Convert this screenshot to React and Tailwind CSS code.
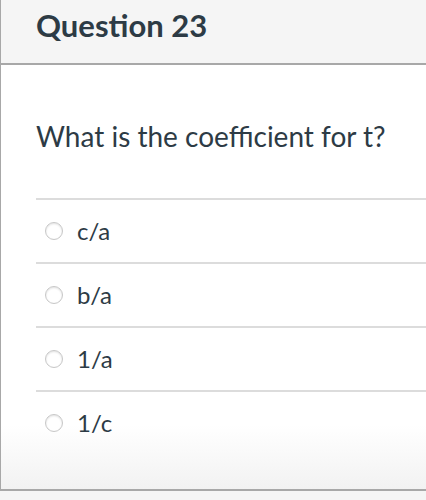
import React from 'react';

const answers = ['c/a', 'b/a', '1/a', '1/c'];

function Radio() {
    return (
        <span className="w-[18px] h-[18px] rounded-full border border-[#c7c7c7] bg-white shadow-[inset_0_1px_2px_rgba(0,0,0,0.12)] shrink-0"></span>
    );
}

export default function App() {
    return (
        <div className="w-[426px] h-[500px] bg-[#f5f5f5] overflow-hidden" style={{ fontFamily: 'Lato, "Open Sans", sans-serif' }}>
            <div className="h-[491px] flex flex-col border-l border-b-2 border-[#a8a8a8] bg-white">
                <div className="h-[65px] shrink-0 bg-[#f5f5f5] border-b-2 border-[#a8a8a8] pl-[35px] pt-[10px]">
                    <h2 className="text-[31px] font-bold text-[#2d3b45] leading-none">Question 23</h2>
                </div>
                <div className="flex-1 pl-[35px] pt-[54px] bg-gradient-to-b from-white from-[85%] to-[#f2f2f2]">
                    <p className="text-[28px] text-[#2d3b45] leading-[34px] pb-[45px]">What is the coefficient for t?</p>
                    <div>
                        {answers.map((a) => (
                            <div key={a} className="border-t-2 border-[#dcdcdc] h-[64px] flex items-center gap-[14px] pl-[9px]">
                                <Radio />
                                <span className="text-[24px] text-[#2d3b45] leading-none">{a}</span>
                            </div>
                        ))}
                    </div>
                </div>
            </div>
        </div>
    );
}
